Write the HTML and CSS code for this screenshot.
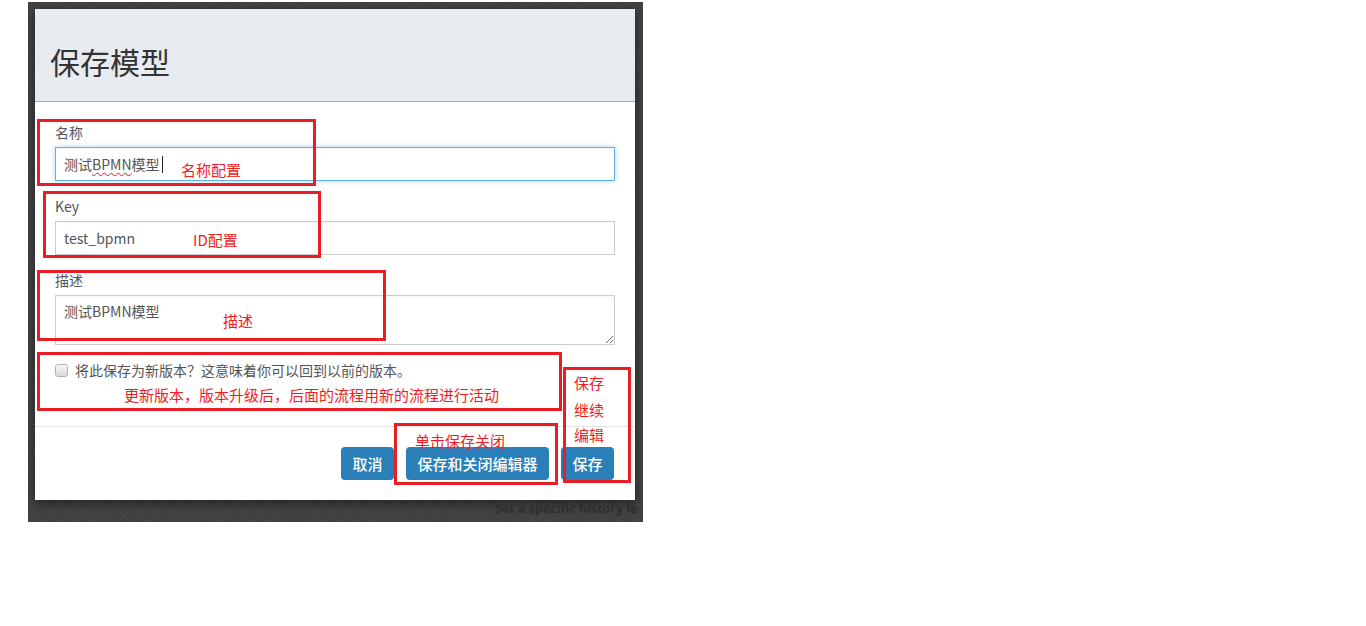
FILE: index.html
```html
<!DOCTYPE html>
<html lang="zh-CN">
<head>
<meta charset="utf-8">
<title>保存模型</title>
<link rel="stylesheet" href="styles.css">
</head>
<body>
<div class="backdrop">
  <div class="modal">
    <div class="modal-header">
      <h2 class="modal-title">保存模型</h2>
    </div>
    <div class="modal-body">
      <div class="form-group">
        <div class="label">名称</div>
        <div class="input focus">测试<span class="spell">BPMN</span>模型<span class="caret"></span></div>
      </div>
      <div class="form-group">
        <div class="label">Key</div>
        <div class="input">test_bpmn</div>
      </div>
      <div class="form-group">
        <div class="label">描述</div>
        <textarea class="textarea" readonly>测试BPMN模型</textarea>
      </div>
      <div class="checkbox-row">
        <span class="checkbox"></span>
        <span class="checkbox-text">将此保存为新版本？这意味着你可以回到以前的版本。</span>
      </div>
    </div>
    <div class="modal-footer">
      <button class="btn">取消</button>
      <button class="btn">保存和关闭编辑器</button>
      <button class="btn">保存</button>
    </div>
  </div>
  <div class="behind">Set a specific history le</div>
</div>

<div class="mark m1"></div>
<div class="mark m2"></div>
<div class="mark m3"></div>
<div class="mark m4"></div>
<div class="mark m5"></div>
<div class="mark m6"></div>

<div class="note n1">名称配置</div>
<div class="note n2">ID配置</div>
<div class="note n3">描述</div>
<div class="note n4">更新版本，版本升级后，后面的流程用新的流程进行活动</div>
<div class="note n5">单击保存关闭</div>
<div class="note n6">保存</div>
<div class="note n7">继续</div>
<div class="note n8">编辑</div>
</body>
</html>
```

FILE: styles.css
```css
html, body {
  margin: 0;
  padding: 0;
  background: #ffffff;
}

body {
  position: relative;
  width: 1366px;
  height: 626px;
  font-family: "Noto Sans CJK SC", "Noto Sans", sans-serif;
  color: #555;
}

.backdrop {
  margin: 2px 0 0 28px;
  width: 615px;
  height: 520px;
  box-sizing: border-box;
  padding: 7px 8px 0 7px;
  background-color: #424242;
  background-image:
    repeating-linear-gradient(45deg, rgba(255,255,255,0.025) 0 1px, transparent 1px 3px),
    repeating-linear-gradient(-45deg, rgba(0,0,0,0.06) 0 1px, transparent 1px 3px);
  overflow: hidden;
}

.modal {
  width: 600px;
  height: 491px;
  background: #fff;
  box-shadow: 0 3px 9px rgba(0,0,0,0.5);
  display: flex;
  flex-direction: column;
}

.modal-header {
  background: #e8ecf0;
  border-bottom: 1px solid #a4abb3;
  padding: 36px 15px 23px;
}

.modal-title {
  margin: 0;
  font-size: 30px;
  line-height: 33px;
  font-weight: 400;
  color: #333;
}

.modal-body {
  padding: 21px 20px 0 20px;
  flex: 1;
}

.form-group {
  margin-bottom: 16px;
}

.label {
  font-size: 14px;
  line-height: 18px;
  height: 18px;
  margin-bottom: 6px;
  color: #555;
}

.input {
  box-sizing: border-box;
  height: 34px;
  border: 1px solid #ccc;
  padding: 0 8px;
  font-size: 14px;
  line-height: 32px;
  color: #555;
  box-shadow: inset 0 1px 1px rgba(0,0,0,0.04);
  white-space: nowrap;
}

.input.focus {
  border-color: #66afe9;
  box-shadow: inset 0 1px 1px rgba(0,0,0,0.04), 0 0 5px rgba(102,175,233,0.55);
}

.spell {
  text-decoration: underline wavy #e0141e;
  text-decoration-thickness: 1px;
  text-decoration-skip-ink: none;
  text-underline-offset: 2px;
}

.caret {
  display: inline-block;
  width: 1px;
  height: 17px;
  background: #222;
  vertical-align: -3px;
  margin-left: 2px;
}

.textarea {
  display: block;
  box-sizing: border-box;
  width: 560px;
  height: 50px;
  margin: 0;
  border: 1px solid #ccc;
  padding: 5px 8px;
  font-family: "Noto Sans CJK SC", "Noto Sans", sans-serif;
  font-size: 14px;
  line-height: 20px;
  color: #555;
  resize: vertical;
  outline: none;
  box-shadow: inset 0 1px 1px rgba(0,0,0,0.04);
}

.checkbox-row {
  display: flex;
  align-items: center;
  height: 20px;
  margin-top: -1px;
}

.checkbox {
  width: 11px;
  height: 11px;
  border: 1px solid #b4b4b4;
  border-radius: 3px;
  background: linear-gradient(#f6f6f6, #dadada);
  margin-right: 7px;
  flex: none;
}

.checkbox-text {
  font-size: 14px;
  line-height: 20px;
  color: #555;
  white-space: nowrap;
}

.modal-footer {
  border-top: 1px solid #e5e5e5;
  padding: 20px 21px 20px;
  display: flex;
  justify-content: flex-end;
  gap: 12px;
}

.btn {
  height: 33px;
  padding: 0 11.5px;
  border: 0;
  border-radius: 4px;
  background: #2a7fb8;
  color: #fff;
  font-family: "Noto Sans CJK SC", "Noto Sans", sans-serif;
  font-size: 15px;
  font-weight: 500;
  line-height: 33px;
  white-space: nowrap;
}

.behind {
  margin: 0 0 0 460px;
  font-family: "Open Sans", "Liberation Sans", sans-serif;
  font-weight: 700;
  font-size: 12.5px;
  line-height: 18px;
  color: #2e2e2e;
  white-space: nowrap;
}

/* annotation overlays */
.mark {
  position: absolute;
  box-sizing: border-box;
  border: 3px solid #ec1c24;
}

.m1 { left: 37px;  top: 119px; width: 279px; height: 67px; }
.m2 { left: 43px;  top: 191px; width: 278px; height: 67px; }
.m3 { left: 37px;  top: 270px; width: 349px; height: 71px; }
.m4 { left: 37px;  top: 352px; width: 525px; height: 59px; }
.m5 { left: 394px; top: 423px; width: 164px; height: 62px; }
.m6 { left: 563px; top: 367px; width: 68px;  height: 116px; }

.note {
  position: absolute;
  font-family: "Noto Sans CJK SC", "Noto Sans", sans-serif;
  font-size: 15px;
  line-height: 18px;
  color: #ee1c24;
  white-space: nowrap;
}

.n1 { left: 181px; top: 161px; }
.n2 { left: 193px; top: 231px; }
.n3 { left: 223px; top: 312px; }
.n4 { left: 124px; top: 386px; }
.n5 { left: 415px; top: 432px; }
.n6 { left: 574px; top: 374px; }
.n7 { left: 574px; top: 401px; }
.n8 { left: 574px; top: 426px; }
```
